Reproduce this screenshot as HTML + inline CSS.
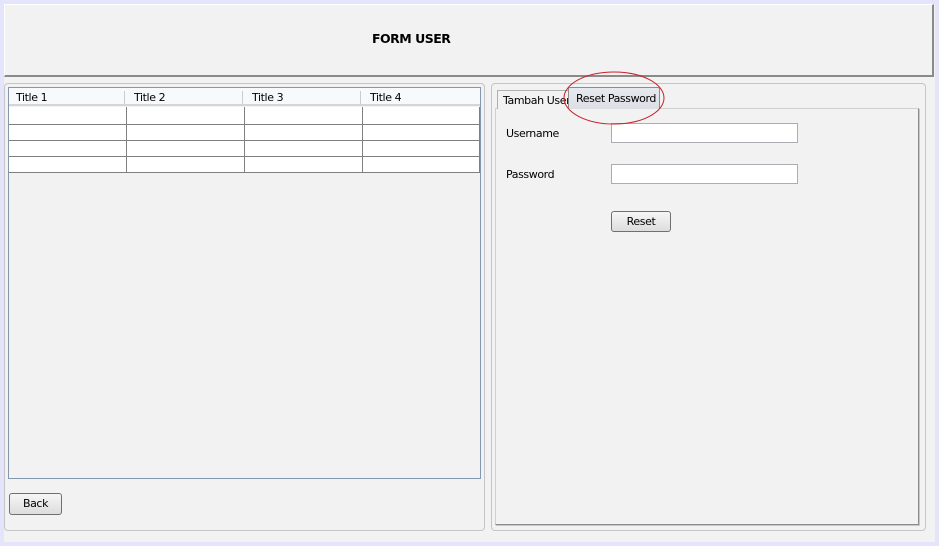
<!DOCTYPE html>
<html><head><style>
*{margin:0;padding:0;box-sizing:border-box}
body{width:939px;height:546px;background:#e4e4fa;position:relative;overflow:hidden;font-family:Tahoma,"DejaVu Sans","Liberation Sans",sans-serif;font-size:11px;color:#000}
.a{position:absolute}
.tx{font-family:"DejaVu Sans",sans-serif;font-size:11px;letter-spacing:-0.4px}
.btn{border:1px solid #707070;border-radius:3px;background:linear-gradient(#f6f6f6,#dddddd);text-align:center}
.inp{background:#fff;border:1px solid #abadb3}
</style></head><body>
<div class="a" style="left:4px;top:4px;width:931px;height:538px;background:#f2f2f2"></div>
<div class="a" style="left:4px;top:4px;width:930px;height:73px;background:#f2f2f2;border-top:1px solid #fff;border-left:1px solid #fff;border-right:2px solid #8a8a8a;border-bottom:2px solid #8a8a8a"></div>
<div class="a" style="left:372px;top:31px;font-family:'DejaVu Sans',sans-serif;font-weight:bold;font-size:12.5px;letter-spacing:-0.5px">FORM USER</div>

<div class="a" style="left:4px;top:83px;width:481px;height:448px;border:1px solid #c5c5c5;border-radius:4px"></div>
<div class="a" style="left:8px;top:87px;width:473px;height:392px;border:1px solid #8397b1;background:#f2f2f2"></div>
<div class="a" style="left:9px;top:88px;width:471px;height:18px;background:#f7f9fd;border-bottom:2px solid #d5d5d5"></div>
<div class="a tx" style="left:16px;top:91px">Title 1</div>
<div class="a tx" style="left:134px;top:91px">Title 2</div>
<div class="a tx" style="left:252px;top:91px">Title 3</div>
<div class="a tx" style="left:370px;top:91px">Title 4</div>
<div class="a" style="left:124px;top:91px;width:1px;height:13px;background:#ccc"></div>
<div class="a" style="left:242px;top:91px;width:1px;height:13px;background:#ccc"></div>
<div class="a" style="left:360px;top:91px;width:1px;height:13px;background:#ccc"></div>
<div class="a" style="left:9px;top:107px;width:471px;height:66px;background:#fff;border-bottom:1px solid #808080"></div>
<div class="a" style="left:9px;top:124px;width:471px;height:1px;background:#808080"></div>
<div class="a" style="left:9px;top:140px;width:471px;height:1px;background:#808080"></div>
<div class="a" style="left:9px;top:156px;width:471px;height:1px;background:#808080"></div>
<div class="a" style="left:126px;top:107px;width:1px;height:66px;background:#808080"></div>
<div class="a" style="left:244px;top:107px;width:1px;height:66px;background:#808080"></div>
<div class="a" style="left:362px;top:107px;width:1px;height:66px;background:#808080"></div>
<div class="a" style="left:479px;top:107px;width:1px;height:66px;background:#808080"></div>
<div class="a btn tx" style="left:9px;top:493px;width:53px;height:22px;line-height:20px">Back</div>

<div class="a" style="left:491px;top:83px;width:435px;height:448px;border:1px solid #c5c5c5;border-radius:4px"></div>
<div class="a" style="left:495px;top:108px;width:424px;height:417px;border:1px solid #8c8c8c;border-top-color:#d0d0d0;border-left-color:#d0d0d0;box-shadow:1px 1px 0 #c8c8c8;background:#f2f2f2"></div>
<div class="a tx" style="left:497px;top:90px;width:72px;height:19px;border:1px solid #b0b0b0;border-bottom:none;background:#f2f2f2;padding:3px 0 0 5px;overflow:hidden;white-space:nowrap">Tambah User</div>
<div class="a tx" style="left:568px;top:87px;width:92px;height:22px;border:1px solid #8c8c8c;border-bottom:none;border-radius:2px 2px 0 0;background:linear-gradient(#e6eaf0,#dcdfe4);padding:4px 0 0 7px;white-space:nowrap">Reset Password</div>
<div class="a tx" style="left:506px;top:127px">Username</div>
<div class="a tx" style="left:506px;top:168px">Password</div>
<div class="a inp" style="left:611px;top:123px;width:187px;height:20px"></div>
<div class="a inp" style="left:611px;top:164px;width:187px;height:20px"></div>
<div class="a btn tx" style="left:611px;top:211px;width:60px;height:21px;line-height:19px">Reset</div>
<svg class="a" style="left:560px;top:70px" width="110" height="56"><ellipse cx="54" cy="28" rx="50" ry="26" fill="none" stroke="#c8202a" stroke-width="1"/></svg>
</body></html>
